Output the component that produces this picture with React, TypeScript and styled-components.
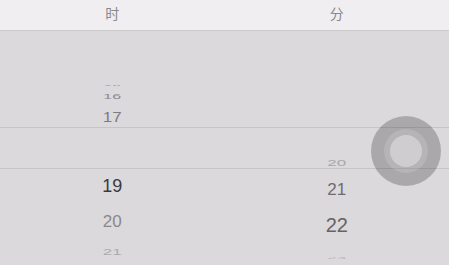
import styled, { createGlobalStyle } from "styled-components";

const GlobalStyle = createGlobalStyle`
  html, body {
    margin: 0;
    padding: 0;
    background: #dbd9dc;
    overflow: hidden;
  }
  * {
    box-sizing: border-box;
  }
`;

type Cell = {
  label: string;
  h: number;
  size: number;
  sy: number;
  color: string;
};

const hours: Cell[] = [
  { label: "15", h: 10, size: 16, sy: 0.15, color: "#a3a1a4" },
  { label: "16", h: 12, size: 16, sy: 0.5, color: "#8c8a8d" },
  { label: "17", h: 31, size: 17, sy: 0.85, color: "#7e7c7f" },
  { label: "", h: 34.5, size: 17, sy: 1, color: "transparent" },
  { label: "19", h: 36, size: 18, sy: 1, color: "#3a393b" },
  { label: "20", h: 35.5, size: 17, sy: 1, color: "#8a888b" },
  { label: "21", h: 24, size: 17, sy: 0.55, color: "#adabae" },
];

const minutes: Cell[] = [
  { label: "20", h: 14, size: 17, sy: 0.5, color: "#a9a7aa" },
  { label: "21", h: 38, size: 17, sy: 1, color: "#6e6c6f" },
  { label: "22", h: 33, size: 20, sy: 1, color: "#656366" },
  { label: "23", h: 35, size: 17, sy: 0.15, color: "#b5b3b6" },
];

export default function App() {
  return (
    <Picker>
      <GlobalStyle />
      <Header>
        <HeaderCell>时</HeaderCell>
        <HeaderCell>分</HeaderCell>
      </Header>
      <Body>
        <Band />
        <Wheel $top={49}>
          {hours.map((c, i) => (
            <Row key={i} $h={c.h}>
              <Digit $size={c.size} $sy={c.sy} $color={c.color}>
                {c.label}
              </Digit>
            </Row>
          ))}
        </Wheel>
        <Wheel $top={125}>
          {minutes.map((c, i) => (
            <Row key={i} $h={c.h}>
              <Digit $size={c.size} $sy={c.sy} $color={c.color}>
                {c.label}
              </Digit>
            </Row>
          ))}
        </Wheel>
        <Touch>
          <Ring>
            <Core />
          </Ring>
        </Touch>
      </Body>
    </Picker>
  );
}

const Picker = styled.div`
  width: 449px;
  height: 265px;
  display: flex;
  flex-direction: column;
  background: #dbd9dc;
  font-family: "Liberation Sans", "Noto Sans CJK SC", sans-serif;
  overflow: hidden;
`;

const Header = styled.div`
  flex: none;
  display: flex;
  height: 31px;
  background: #f0eef1;
  border-bottom: 1px solid #cbc9cc;
`;

const HeaderCell = styled.div`
  flex: 1;
  text-align: center;
  font-family: "Noto Sans CJK SC", sans-serif;
  font-size: 14px;
  line-height: 27px;
  color: #8a888b;
`;

const Body = styled.div`
  position: relative;
  flex: 1;
  min-height: 0;
  display: flex;
`;

const Band = styled.div`
  position: absolute;
  left: 0;
  right: 0;
  top: 96px;
  height: 42px;
  border-top: 1px solid #c6c4c7;
  border-bottom: 1px solid #c6c4c7;
`;

const Wheel = styled.div<{ $top: number }>`
  flex: 1;
  display: flex;
  flex-direction: column;
  padding-top: ${(p) => p.$top}px;
`;

const Row = styled.div<{ $h: number }>`
  flex: none;
  height: ${(p) => p.$h}px;
  display: flex;
  align-items: center;
  justify-content: center;
`;

const Digit = styled.span<{ $size: number; $sy: number; $color: string }>`
  display: inline-block;
  font-size: ${(p) => p.$size}px;
  line-height: 1;
  color: ${(p) => p.$color};
  transform: scaleY(${(p) => p.$sy});
`;

const Touch = styled.div`
  position: absolute;
  left: 371px;
  top: 85px;
  width: 70px;
  height: 70px;
  border-radius: 50%;
  background: rgba(20, 14, 20, 0.24);
  display: flex;
  align-items: center;
  justify-content: center;
`;

const Ring = styled.div`
  width: 44px;
  height: 44px;
  border-radius: 50%;
  background: rgba(255, 255, 255, 0.14);
  display: flex;
  align-items: center;
  justify-content: center;
`;

const Core = styled.div`
  width: 32px;
  height: 32px;
  border-radius: 50%;
  background: rgba(255, 255, 255, 0.34);
`;
